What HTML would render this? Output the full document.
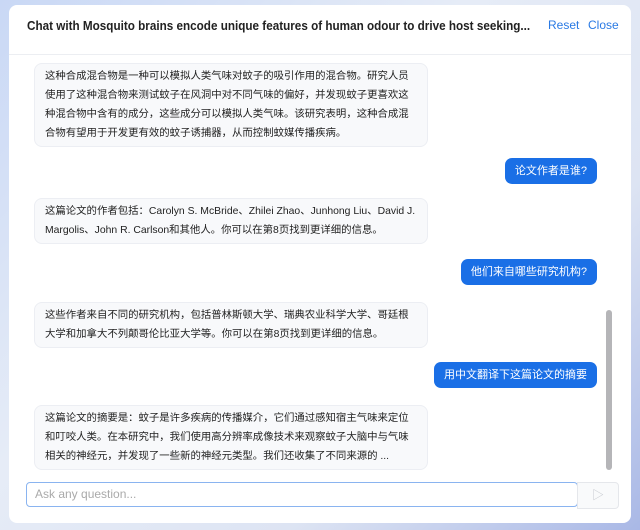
<!DOCTYPE html>
<html><head><meta charset="utf-8"><style>
body{margin:0;width:640px;height:530px;overflow:hidden;background:linear-gradient(135deg,#c9d8f5,#e6ecf7 40%,#dde4f3 70%,#a9b8e6);font-family:"Liberation Sans","Noto Sans CJK SC",sans-serif;position:relative}
.m{position:absolute;left:9px;top:5px;width:622px;height:518px;background:#fff;border-radius:8px}
.h{position:absolute;left:0;top:0;width:622px;height:49px;border-bottom:1px solid #eceef2}
.t{position:absolute;left:18px;top:13px;font-size:13px;font-weight:bold;color:#222;white-space:nowrap;transform:scaleX(0.9);transform-origin:0 0}
.l{position:absolute;top:13px;font-size:12px;color:#2a7ae4}
.a{position:absolute;left:25px;width:372px;padding:3px 10px 3px 10px;background:#f8f9fb;border:1px solid #eceef3;border-radius:8px;font-size:10.4px;line-height:19px;color:#222}
.u{position:absolute;right:34px;background:#1a6fe6;color:#fff;font-size:11px;padding:5px 10px;border-radius:7px;line-height:16px}
</style></head><body>
<div class="m">
<div class="h"><div class="t">Chat with Mosquito brains encode unique features of human odour to drive host seeking...</div>
<div class="l" style="left:539px">Reset</div><div class="l" style="left:579px">Close</div></div>
<div class="a" style="top:58px">这种合成混合物是一种可以模拟人类气味对蚊子的吸引作用的混合物。研究人员使用了这种混合物来测试蚊子在风洞中对不同气味的偏好，并发现蚊子更喜欢这种混合物中含有的成分，这些成分可以模拟人类气味。该研究表明，这种合成混合物有望用于开发更有效的蚊子诱捕器，从而控制蚊媒传播疾病。</div>
<div class="u" style="top:153px">论文作者是谁?</div>
<div class="a" style="top:193px">这篇论文的作者包括：Carolyn S. McBride、Zhilei Zhao、Junhong Liu、David J. Margolis、John R. Carlson和其他人。你可以在第8页找到更详细的信息。</div>
<div class="u" style="top:254px">他们来自哪些研究机构?</div>
<div class="a" style="top:297px">这些作者来自不同的研究机构，包括普林斯顿大学、瑞典农业科学大学、哥廷根大学和加拿大不列颠哥伦比亚大学等。你可以在第8页找到更详细的信息。</div>
<div class="u" style="top:357px">用中文翻译下这篇论文的摘要</div>
<div class="a" style="top:400px">这篇论文的摘要是：蚊子是许多疾病的传播媒介，它们通过感知宿主气味来定位和叮咬人类。在本研究中，我们使用高分辨率成像技术来观察蚊子大脑中与气味相关的神经元，并发现了一些新的神经元类型。我们还收集了不同来源的 ...</div>
<div style="position:absolute;left:597px;top:305px;width:6px;height:160px;background:#b5b5b8;border-radius:3px"></div>
<div style="position:absolute;left:17px;top:477px;width:542px;height:23px;border:1px solid #8ab4f0;border-radius:4px;font-size:12px;color:#aaa;line-height:23px;padding-left:8px;background:#fff">Ask any question...</div>
<div style="position:absolute;left:568px;top:477px;width:40px;height:25px;border:1px solid #e5e7eb;border-radius:0 4px 4px 0;background:#f9fafb;color:#c5c8ce;text-align:center;line-height:25px;font-size:12px">▷</div>
</div>
</body></html>
